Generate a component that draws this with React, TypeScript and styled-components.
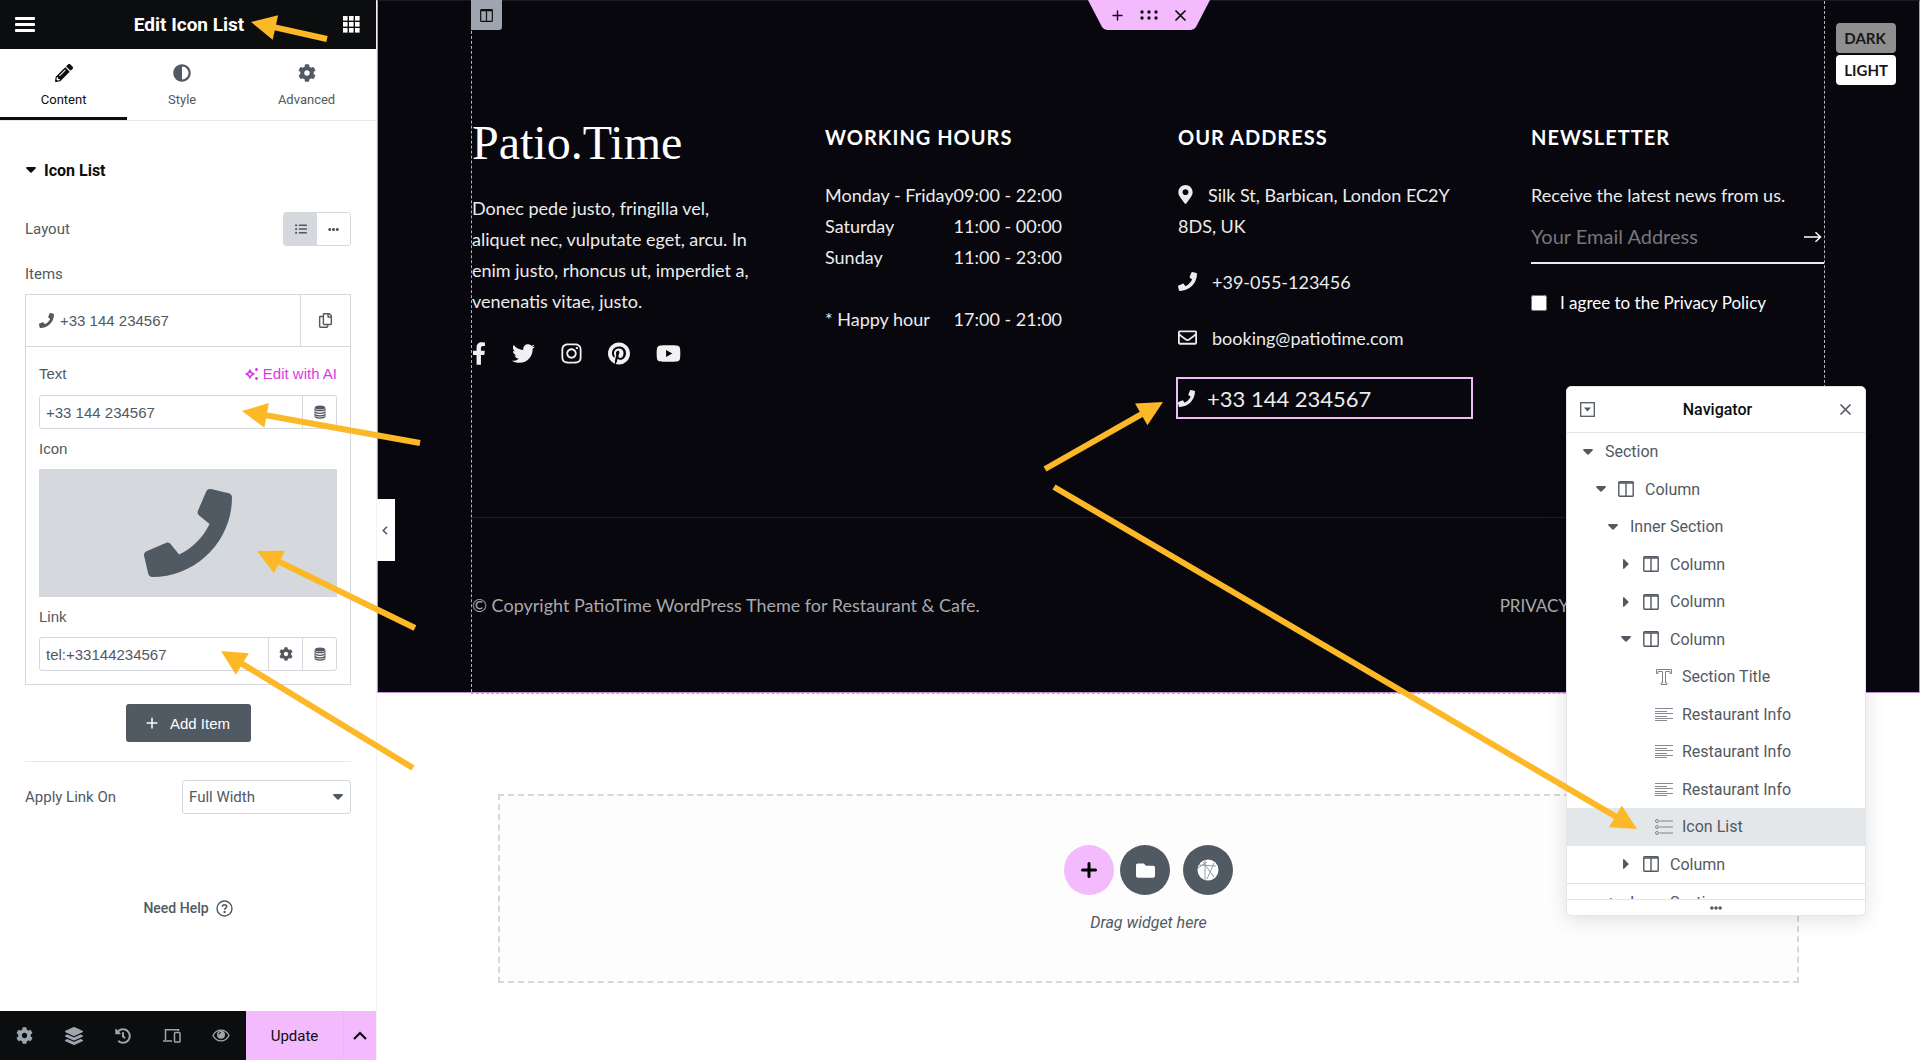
import React from "react";
import styled, { createGlobalStyle } from "styled-components";
import {
  FaAdjust,
  FaCog,
  FaEllipsisH,
  FaFacebookF,
  FaFolder,
  FaHistory,
  FaInstagram,
  FaLayerGroup,
  FaListUl,
  FaMapMarkerAlt,
  FaPencilAlt,
  FaPhone,
  FaPinterest,
  FaRegCopy,
  FaRegEnvelope,
  FaTwitter,
  FaYoutube,
} from "react-icons/fa";

const ui = 'Roboto, "Noto Sans", sans-serif';
const field = '"Liberation Sans", Arial, sans-serif';
const site = 'Lato, "Open Sans", sans-serif';
const slate = "#515962";
const line = "#d5d8dc";
const pink = "#f3bafd";
const ink = "#0c0d0e";
const night = "#07070d";

const GlobalStyle = createGlobalStyle`
  *, *::before, *::after { box-sizing: border-box; }
  body { margin: 0; background: #fff; font-family: ${ui}; color: ${slate}; }
  button, input, select { font: inherit; color: inherit; }
  h1, h2, p, ul { margin: 0; padding: 0; }
  ul { list-style: none; }
  svg { display: block; }
`;

const Page = styled.div`
  position: relative;
  display: flex;
  min-height: 100vh;
  overflow: hidden;
`;

/* ---------- editor panel ---------- */

const Panel = styled.aside`
  display: flex;
  flex-direction: column;
  flex: none;
  width: 377px;
  border-right: 1px solid #f1f2f3;
  background: #fff;
`;

const PanelHeader = styled.header`
  display: flex;
  align-items: center;
  justify-content: space-between;
  height: 49px;
  padding: 0 16px 0 15px;
  background: ${ink};
  color: #fff;
`;

const PanelTitle = styled.h1`
  font-size: 19px;
  font-weight: 700;
  line-height: 24px;
`;

const PlainButton = styled.button`
  display: flex;
  align-items: center;
  justify-content: center;
  padding: 0;
  border: 0;
  background: none;
  cursor: pointer;
`;

const Tabs = styled.nav`
  display: flex;
  height: 72px;
  border-bottom: 1px solid #e6e8ea;
`;

const Tab = styled.button<{ $active?: boolean }>`
  display: flex;
  flex: 1 1 auto;
  flex-direction: column;
  align-items: center;
  gap: 9px;
  padding: 15px 0 0;
  border: 0;
  border-bottom: 3px solid ${(p) => (p.$active ? ink : "transparent")};
  background: none;
  color: ${(p) => (p.$active ? ink : slate)};
  font-size: 13px;
  line-height: 18px;
  cursor: pointer;
`;

const Controls = styled.div`
  display: flex;
  flex: 1;
  flex-direction: column;
  padding: 37px 25px 0;
`;

const SectionToggle = styled.button`
  display: flex;
  align-items: center;
  gap: 8px;
  height: 24px;
  padding: 0 1px;
  border: 0;
  background: none;
  color: ${ink};
  font-size: 16px;
  font-weight: 700;
  cursor: pointer;
`;

const ControlRow = styled.div<{ $top: number }>`
  display: flex;
  align-items: center;
  justify-content: space-between;
  margin-top: ${(p) => p.$top}px;
`;

const Label = styled.label`
  font-size: 15px;
  line-height: 20px;
`;

const Choice = styled.div`
  display: flex;
  height: 34px;
  border: 1px solid ${line};
  border-radius: 3px;
  overflow: hidden;
`;

const ChoiceButton = styled(PlainButton)<{ $active?: boolean }>`
  width: 33px;
  background: ${(p) => (p.$active ? line : "#fff")};
`;

const ItemsLabel = styled.div`
  margin-top: 18px;
  font-size: 15px;
  line-height: 20px;
`;

const Repeater = styled.div`
  margin-top: 10px;
  border: 1px solid ${line};
  font-family: ${field};
  font-size: 15px;
`;

const RepeaterHead = styled.div`
  display: flex;
  height: 52px;
  border-bottom: 1px solid ${line};
`;

const RepeaterTitle = styled.button`
  display: flex;
  flex: 1;
  align-items: center;
  gap: 6px;
  padding: 0 13px;
  border: 0;
  background: none;
  cursor: pointer;
`;

const CopyButton = styled(PlainButton)`
  width: 50px;
  border-left: 1px solid ${line};
`;

const RepeaterBody = styled.div`
  display: flex;
  flex-direction: column;
  padding: 17px 13px 13px;
`;

const FieldHead = styled.div`
  display: flex;
  align-items: center;
  justify-content: space-between;
  line-height: 20px;
`;

const AiButton = styled(PlainButton)`
  gap: 4px;
  color: #d93bdf;
`;

const FieldBox = styled.div`
  display: flex;
  height: 34px;
  margin: 11px 0 10px;
  border: 1px solid ${line};
  border-radius: 3px;
`;

const LastFieldBox = styled(FieldBox)`
  margin: 10px 0 0;
`;

const FieldInput = styled.input`
  flex: 1;
  min-width: 0;
  padding: 0 6px;
  border: 0;
  outline: 0;
  background: none;
`;

const FieldButton = styled(PlainButton)`
  width: 34px;
  border-left: 1px solid ${line};
`;

const IconPreview = styled.button`
  display: flex;
  align-items: center;
  justify-content: center;
  height: 128px;
  margin: 10px 0;
  padding: 0;
  border: 0;
  background: ${line};
  cursor: pointer;
`;

const AddItem = styled.button`
  display: flex;
  align-items: center;
  align-self: center;
  justify-content: center;
  gap: 12px;
  width: 125px;
  height: 38px;
  margin-top: 19px;
  border: 0;
  border-radius: 3px;
  background: ${slate};
  color: #fff;
  font-family: ${field};
  font-size: 15px;
  cursor: pointer;
`;

const Rule = styled.hr`
  width: 100%;
  margin: 19px 0 0;
  border: 0;
  border-top: 1px solid #e6e8ea;
`;

const SelectWrap = styled.div`
  position: relative;
  width: 169px;

  svg {
    position: absolute;
    top: 14px;
    right: 8px;
    pointer-events: none;
  }
`;

const Select = styled.select`
  width: 100%;
  height: 34px;
  padding: 0 6px;
  border: 1px solid ${line};
  border-radius: 3px;
  appearance: none;
  background: #fff;
  font-size: 15px;
`;

const HelpLink = styled.a`
  display: flex;
  align-items: center;
  align-self: center;
  gap: 7px;
  margin-top: 84px;
  color: ${slate};
  font-size: 14px;
  font-weight: 500;
  line-height: 20px;
  text-decoration: none;
`;

const PanelFooter = styled.footer`
  display: flex;
  height: 49px;
  background: ${ink};
  color: #9da5ae;
`;

const Tools = styled.div`
  display: flex;
  flex: 1;
`;

const Tool = styled(PlainButton)`
  flex: 1;
`;

const Update = styled(PlainButton)`
  width: 97px;
  background: ${pink};
  color: ${ink};
  font-size: 15px;
`;

const UpdateMore = styled(PlainButton)`
  width: 33px;
  border-left: 1px solid #efb3f9;
  background: ${pink};
  color: ${ink};
`;

/* ---------- page preview ---------- */

const Preview = styled.main`
  position: relative;
  flex: 1;
  min-width: 0;
  font-family: ${site};
`;

const FooterSection = styled.section`
  position: relative;
  padding: 0 94px 0 93px;
  border: 1px solid #c58bd0;
  border-top-color: #1a1a20;
  background: ${night};
  color: #ececec;
  font-size: 18px;
  line-height: 31px;
`;

const FooterInner = styled.div`
  border: 1px dashed #b4b4b8;
  border-width: 0 1px;
`;

const Columns = styled.div`
  display: grid;
  grid-template-columns: repeat(4, minmax(0, 1fr));
  gap: 60px;
  padding: 118px 0 98px;
  border-bottom: 1px solid #1c1c22;
`;

const Column = styled.div`
  padding-top: 6px;
`;

const Logo = styled.h2`
  margin-bottom: 26px;
  color: #fff;
  font-family: "Liberation Serif", "Times New Roman", serif;
  font-size: 48px;
  font-weight: 400;
  line-height: 48px;
`;

const Social = styled.div`
  display: flex;
  align-items: center;
  gap: 26px;
  height: 24px;
  margin-top: 24px;
`;

const SocialLink = styled.a<{ $width: number }>`
  color: #f1f1f1;

  svg {
    width: ${(p) => p.$width}px;
    height: 23px;
  }
`;

const ColumnTitle = styled.h2`
  margin-bottom: 31px;
  color: #fff;
  font-size: 20px;
  font-weight: 700;
  letter-spacing: 1px;
  line-height: 24px;
`;

const Hours = styled.table`
  border-collapse: collapse;

  th {
    width: 128px;
    padding: 0;
    font-weight: 400;
    text-align: left;
    white-space: nowrap;
  }

  td {
    height: 31px;
    padding: 0;
    white-space: nowrap;
  }
`;

const Contact = styled.p<{ $icon: number }>`
  margin-bottom: 25px;

  svg {
    display: inline-block;
    width: ${(p) => p.$icon}px;
    height: 19px;
    margin-right: 15px;
    vertical-align: -2px;
  }
`;

const Selected = styled.a`
  display: flex;
  align-items: center;
  gap: 12px;
  height: 42px;
  margin: -2px -2px 0;
  border: 2px solid #eebcf6;
  color: #ececec;
  font-size: 22px;
  text-decoration: none;
`;

const Subscribe = styled.form`
  display: flex;
  align-items: center;
  height: 53px;
  border-bottom: 2px solid #ececec;

  input {
    flex: 1;
    min-width: 0;
    padding: 0;
    border: 0;
    outline: 0;
    background: none;
    font-size: 20px;
  }

  input::placeholder {
    color: #77777b;
    opacity: 1;
  }
`;

const Agree = styled.label`
  display: flex;
  align-items: center;
  gap: 13px;
  margin-top: 23px;
  color: #fff;
  font-size: 17px;

  input {
    width: 16px;
    height: 16px;
    margin: 0;
  }
`;

const Legal = styled.div`
  display: flex;
  justify-content: space-between;
  padding: 72px 255px 71px 0;
  color: #a9a9ab;

  a {
    color: inherit;
    font-size: 17px;
    text-decoration: none;
  }
`;

const ColumnHandle = styled.button`
  position: absolute;
  top: -1px;
  left: 93px;
  display: flex;
  align-items: center;
  justify-content: center;
  width: 31px;
  height: 30px;
  padding: 0;
  border: 0;
  border-radius: 0 0 3px 0;
  background: #9da5ae;
  color: ${ink};
`;

const SectionHandle = styled.div`
  position: absolute;
  top: -1px;
  left: 50%;
  display: flex;
  align-items: center;
  justify-content: center;
  gap: 17px;
  width: 122px;
  height: 30px;
  margin-left: -61px;
  color: ${ink};

  > svg {
    position: absolute;
    inset: 0;
  }

  button {
    position: relative;
  }
`;

const Modes = styled.div`
  position: absolute;
  top: 22px;
  right: 23px;
  display: flex;
  flex-direction: column;
  gap: 2px;
`;

const Mode = styled.button<{ $dim?: boolean }>`
  height: 30px;
  padding: 0 8px;
  border: 0;
  border-radius: 4px;
  background: ${(p) => (p.$dim ? "#8f8f8f" : "#fff")};
  color: #17171b;
  font-size: 15px;
  font-weight: 700;
  text-align: left;
`;

const BottomGuide = styled.div`
  margin: 0 94px;
  border-top: 1px dashed #c9a5d4;
`;

const DropZone = styled.section`
  display: flex;
  flex-direction: column;
  align-items: center;
  margin: 100px 121px 77px;
  padding: 49px 0 48px;
  border: 2px dashed ${line};
  background: #fdfdfd;
  color: ${slate};
  font-family: ${ui};
  font-size: 16px;
  font-style: italic;
  line-height: 20px;
`;

const Circles = styled.div`
  display: flex;
  gap: 6px;
  margin-bottom: 18px;
`;

const Circle = styled(PlainButton)<{ $primary?: boolean; $apart?: boolean }>`
  width: 50px;
  height: 50px;
  margin-left: ${(p) => (p.$apart ? 7 : 0)}px;
  border-radius: 50%;
  background: ${(p) => (p.$primary ? pink : slate)};
  color: ${(p) => (p.$primary ? "#000" : "#fff")};
`;

const Collapse = styled.button`
  position: absolute;
  top: 499px;
  left: 0;
  display: flex;
  align-items: center;
  width: 18px;
  height: 62px;
  padding: 0 0 0 4px;
  border: 0;
  background: #fff;
  color: ${slate};
`;

/* ---------- navigator ---------- */

const Navigator = styled.aside`
  position: absolute;
  top: 386px;
  right: 54px;
  width: 300px;
  border: 1px solid #e3e5e8;
  border-radius: 5px;
  background: #fff;
  box-shadow: 0 4px 20px rgba(0, 0, 0, 0.12);
  font-size: 16px;
  overflow: hidden;
`;

const NavHeader = styled.header`
  display: flex;
  align-items: center;
  justify-content: space-between;
  height: 46px;
  padding: 0 14px 0 13px;
  border-bottom: 1px solid #e3e6e9;

  h2 {
    color: ${ink};
    font-size: 16px;
    font-weight: 500;
  }
`;

const NavScroll = styled.div`
  height: 467px;
  overflow: hidden;
  border-bottom: 1px solid #e3e6e9;
`;

const Tree = styled.ul`
  display: grid;
  grid-auto-rows: 1fr;
  height: 450px;
`;

const indents = [16, 29, 41, 54, 88];

const TreeRow = styled.li<{ $level: number; $active?: boolean }>`
  display: flex;
  align-items: center;
  padding-left: ${(p) => indents[p.$level]}px;
  background: ${(p) => (p.$active ? "#e4e7ea" : "transparent")};
`;

const NextRow = styled(TreeRow).attrs({ as: "div" })`
  height: 38px;
  border-top: 1px solid #dde1e4;
`;

const Twist = styled.span`
  flex: none;
  width: 22px;
`;

const NodeIcon = styled.span`
  flex: none;
  width: 27px;
`;

const NavFooter = styled.footer`
  display: flex;
  align-items: center;
  justify-content: center;
  height: 15px;
`;

const Annotations = styled.svg`
  position: absolute;
  top: 0;
  left: 0;
  pointer-events: none;
`;

/* ---------- icons ---------- */

const CaretDown = ({ size = 10 }: { size?: number }) => (
  <svg width={size} height={6} viewBox="0 0 10 6" fill="currentColor">
    <path d="M1 0h8c.8 0 1.200.8.6 1.400l-4 4a.9.9 0 0 1-1.200 0l-4-4C-.2.800.200 0 1 0z" />
  </svg>
);

const CaretRight = () => (
  <svg width="10" height="10" viewBox="0 0 10 10" fill="currentColor">
    <path d="M2 1c0-.8.800-1.200 1.400-.6l4 4a.9.9 0 0 1 0 1.200l-4 4C2.800 10.200 2 9.800 2 9z" />
  </svg>
);

const MenuIcon = () => (
  <svg width="20" height="16" viewBox="0 0 20 16" fill="currentColor">
    <rect width="20" height="3" rx="1" y="0" />
    <rect width="20" height="3" rx="1" y="6" />
    <rect width="20" height="3" rx="1" y="12" />
  </svg>
);

const AppsIcon = () => (
  <svg width="17" height="17" viewBox="0 0 17 17" fill="currentColor">
    {[0, 6, 12].map((y) => [0, 6, 12].map((x) => <rect key={`${x}-${y}`} x={x} y={y} width="4.600" height="4.600" />))}
  </svg>
);

const DatabaseIcon = () => (
  <svg width="12" height="14" viewBox="0 0 12 14">
    <ellipse cx="6" cy="2.400" rx="5" ry="2" fill="currentColor" />
    <g fill="none" stroke="currentColor" strokeWidth="1.300">
      <path d="M1 4.200c1 2 9 2 10 0M1 6.800c1 2 9 2 10 0M1 9.400c1 2 9 2 10 0M1 11.500c1 2 9 2 10 0" />
      <path d="M1 2.500v9.200M11 2.500v9.200" strokeWidth=".8" />
    </g>
  </svg>
);

const SparkleIcon = () => (
  <svg width="14" height="14" viewBox="0 0 14 14" fill="none" stroke="currentColor" strokeWidth="1.500" strokeLinejoin="round">
    <path d="M5 3c.6 2.500 1.500 3.400 4 4-2.500.6-3.400 1.500-4 4-.6-2.500-1.500-3.400-4-4 2.500-.6 3.400-1.500 4-4z" />
    <path d="M11.500 1v3M10 2.500h3M11.500 10v3M10 11.500h3" />
  </svg>
);

const PlusIcon = ({ size, weight = 2 }: { size: number; weight?: number }) => (
  <svg width={size} height={size} viewBox="0 0 16 16" fill="none" stroke="currentColor" strokeWidth={weight} strokeLinecap="round">
    <path d="M8 1.500v13M1.500 8h13" />
  </svg>
);

const CloseIcon = () => (
  <svg width="11" height="11" viewBox="0 0 11 11" fill="none" stroke="currentColor" strokeWidth="1.700" strokeLinecap="round">
    <path d="M1 1l9 9M10 1l-9 9" />
  </svg>
);

const DragDots = () => (
  <svg width="18" height="10" viewBox="0 0 18 10" fill="currentColor">
    {[2, 9, 16].map((x) => [2, 8].map((y) => <circle key={`${x}-${y}`} cx={x} cy={y} r="1.700" />))}
  </svg>
);

const HelpIcon = () => (
  <svg width="17" height="17" viewBox="0 0 17 17" fill="none" stroke="currentColor" strokeWidth="1.400">
    <circle cx="8.500" cy="8.500" r="7.500" />
    <path d="M6.400 6.800c0-2.700 4.300-2.600 4.300-.2 0 1.500-2.100 1.500-2.100 3.100" strokeWidth="1.600" />
    <circle cx="8.600" cy="12" r=".5" fill="currentColor" />
  </svg>
);

const DevicesIcon = () => (
  <svg width="18" height="16" viewBox="0 0 18 16" fill="none" stroke="currentColor" strokeWidth="1.500">
    <path d="M15.500 3V1.800H2.500V12M0 13h9" />
    <rect x="11.500" y="4.500" width="5.500" height="9.500" rx=".8" />
  </svg>
);

const EyeIcon = () => (
  <svg width="18" height="13" viewBox="0 0 18 13">
    <path d="M1 6.500C4.500-.7 13.500-.7 17 6.500c-3.500 7.200-12.500 7.200-16 0z" fill="none" stroke="currentColor" strokeWidth="1.400" />
    <circle cx="9" cy="5.800" r="4" fill="currentColor" />
    <path d="M6.800 5.500A2.200 2.200 0 0 1 9 3.400" fill="none" stroke={ink} strokeWidth="1" />
  </svg>
);

const ChevronUp = () => (
  <svg width="14" height="9" viewBox="0 0 14 9" fill="none" stroke="currentColor" strokeWidth="2.200">
    <path d="M1 8l6-6 6 6" />
  </svg>
);

const ChevronLeft = () => (
  <svg width="8" height="9" viewBox="0 0 8 9" fill="none" stroke="currentColor" strokeWidth="1.600">
    <path d="M6 .8L2.300 4.500 6 8.200" />
  </svg>
);

const ColumnsIcon = ({ size = 16 }: { size?: number }) => (
  <svg width={size} height={size} viewBox="0 0 16 16" fill="none" stroke="currentColor" strokeWidth="1.400">
    <rect x=".8" y=".8" width="14.400" height="14.400" rx=".8" />
    <path d="M.8 2h14.400M8 2v13" />
  </svg>
);

const HeadingIcon = () => (
  <svg width="18" height="18" viewBox="0 0 18 18" fill="none" stroke="#7d848c" strokeWidth="1">
    <path d="M1.500 1.500h15v4h-1.500v-2h-4.500v11.500h1.500v1.500h-6v-1.500h1.500V3.500H3v2H1.500z" />
  </svg>
);

const TextIcon = () => (
  <svg width="18" height="13" viewBox="0 0 18 13" stroke="#858c94" strokeWidth="1">
    <path d="M0 .5h18M0 3.500h12M0 5.500h18M0 8.500h12M0 10.500h18M0 12.500h12" />
  </svg>
);

const ListIcon = () => (
  <svg width="18" height="16" viewBox="0 0 18 16" fill="none" stroke="#7d848c" strokeWidth="1">
    {[2, 8, 14].map((y) => (
      <g key={y}>
        <circle cx="2" cy={y} r="1.500" />
        <path d={`M4.500 ${y}H18`} />
      </g>
    ))}
  </svg>
);

const DockIcon = () => (
  <svg width="15" height="15" viewBox="0 0 15 15">
    <rect x=".7" y=".7" width="13.600" height="13.600" fill="none" stroke="currentColor" strokeWidth="1.300" />
    <path d="M4 5.500h7L7.500 9.500z" fill="currentColor" />
  </svg>
);

const ArrowRight = () => (
  <svg width="20" height="12" viewBox="0 0 20 12" fill="none" stroke="#fff" strokeWidth="1.500">
    <path d="M0 6h16M11.500 1.200L16.500 6l-5 4.800" />
  </svg>
);

const GlobeIcon = () => (
  <svg width="22" height="22" viewBox="0 0 22 22">
    <circle cx="11" cy="11" r="10.500" fill="#fff" />
    <path d="M8 1v20M2 6l17 1M6 3l11 15M17 4L10 20M1 9l9-6" fill="none" stroke="#8d939a" strokeWidth=".9" />
  </svg>
);

const Arrow = ({ from, to }: { from: [number, number]; to: [number, number] }) => {
  const angle = (Math.atan2(to[1] - from[1], to[0] - from[0]) * 180) / Math.PI;
  const length = Math.hypot(to[0] - from[0], to[1] - from[1]);
  return (
    <g transform={`translate(${from[0]} ${from[1]}) rotate(${angle})`} fill="#fdb827">
      <rect y="-3" width={length - 20} height="6" />
      <path d={`M${length} 0l-25-12.500v25z`} />
    </g>
  );
};

/* ---------- data ---------- */

const hours: [string, string][] = [
  ["Monday - Friday", "09:00 - 22:00"],
  ["Saturday", "11:00 - 00:00"],
  ["Sunday", "11:00 - 23:00"],
  ["", ""],
  ["* Happy hour", "17:00 - 21:00"],
];

const socials = [
  { name: "Facebook", Icon: FaFacebookF, width: 14 },
  { name: "Twitter", Icon: FaTwitter, width: 23 },
  { name: "Instagram", Icon: FaInstagram, width: 21 },
  { name: "Pinterest", Icon: FaPinterest, width: 22 },
  { name: "YouTube", Icon: FaYoutube, width: 25 },
];

type Node = { level: number; name: string; open?: boolean; icon?: React.ReactNode; active?: boolean };

const nodes: Node[] = [
  { level: 0, name: "Section", open: true },
  { level: 1, name: "Column", open: true, icon: <ColumnsIcon /> },
  { level: 2, name: "Inner Section", open: true },
  { level: 3, name: "Column", open: false, icon: <ColumnsIcon /> },
  { level: 3, name: "Column", open: false, icon: <ColumnsIcon /> },
  { level: 3, name: "Column", open: true, icon: <ColumnsIcon /> },
  { level: 4, name: "Section Title", icon: <HeadingIcon /> },
  { level: 4, name: "Restaurant Info", icon: <TextIcon /> },
  { level: 4, name: "Restaurant Info", icon: <TextIcon /> },
  { level: 4, name: "Restaurant Info", icon: <TextIcon /> },
  { level: 4, name: "Icon List", icon: <ListIcon />, active: true },
  { level: 3, name: "Column", open: false, icon: <ColumnsIcon /> },
];

const arrows: { from: [number, number]; to: [number, number] }[] = [
  { from: [327, 39], to: [251, 22] },
  { from: [420, 443], to: [242, 411] },
  { from: [415, 628], to: [257, 551] },
  { from: [413, 768], to: [221, 651] },
  { from: [1045, 469], to: [1163, 402] },
  { from: [1054, 487], to: [1637, 829] },
];

export default function App() {
  return (
    <>
      <GlobalStyle />
      <Page>
        <Panel>
          <PanelHeader>
            <PlainButton aria-label="Menu"><MenuIcon /></PlainButton>
            <PanelTitle>Edit Icon List</PanelTitle>
            <PlainButton aria-label="Widgets"><AppsIcon /></PlainButton>
          </PanelHeader>
          <Tabs>
            <Tab $active><FaPencilAlt size={18} />Content</Tab>
            <Tab><FaAdjust size={18} />Style</Tab>
            <Tab><FaCog size={18} />Advanced</Tab>
          </Tabs>
          <Controls>
            <SectionToggle><CaretDown />Icon List</SectionToggle>
            <ControlRow $top={30}>
              <Label as="span">Layout</Label>
              <Choice>
                <ChoiceButton $active aria-label="Default"><FaListUl size={12} /></ChoiceButton>
                <ChoiceButton aria-label="Inline"><FaEllipsisH size={11} /></ChoiceButton>
              </Choice>
            </ControlRow>
            <ItemsLabel>Items</ItemsLabel>
            <Repeater>
              <RepeaterHead>
                <RepeaterTitle><FaPhone size={15} />+33 144 234567</RepeaterTitle>
                <CopyButton aria-label="Duplicate"><FaRegCopy size={15} /></CopyButton>
              </RepeaterHead>
              <RepeaterBody>
                <FieldHead>
                  <label htmlFor="item-text">Text</label>
                  <AiButton><SparkleIcon />Edit with AI</AiButton>
                </FieldHead>
                <FieldBox>
                  <FieldInput id="item-text" defaultValue="+33 144 234567" />
                  <FieldButton aria-label="Dynamic text"><DatabaseIcon /></FieldButton>
                </FieldBox>
                <FieldHead>Icon</FieldHead>
                <IconPreview aria-label="Choose icon"><FaPhone size={88} /></IconPreview>
                <FieldHead><label htmlFor="item-link">Link</label></FieldHead>
                <LastFieldBox>
                  <FieldInput id="item-link" defaultValue="tel:+33144234567" />
                  <FieldButton aria-label="Link options"><FaCog size={14} /></FieldButton>
                  <FieldButton aria-label="Dynamic link"><DatabaseIcon /></FieldButton>
                </LastFieldBox>
              </RepeaterBody>
            </Repeater>
            <AddItem><PlusIcon size={12} />Add Item</AddItem>
            <Rule />
            <ControlRow $top={18}>
              <Label htmlFor="apply-link">Apply Link On</Label>
              <SelectWrap>
                <Select id="apply-link"><option>Full Width</option></Select>
                <CaretDown />
              </SelectWrap>
            </ControlRow>
            <HelpLink href="#help">Need Help<HelpIcon /></HelpLink>
          </Controls>
          <PanelFooter>
            <Tools>
              <Tool aria-label="Settings"><FaCog size={17} /></Tool>
              <Tool aria-label="Navigator"><FaLayerGroup size={18} /></Tool>
              <Tool aria-label="History"><FaHistory size={16} /></Tool>
              <Tool aria-label="Responsive mode"><DevicesIcon /></Tool>
              <Tool aria-label="Preview changes"><EyeIcon /></Tool>
            </Tools>
            <Update>Update</Update>
            <UpdateMore aria-label="Save options"><ChevronUp /></UpdateMore>
          </PanelFooter>
        </Panel>

        <Preview>
          <FooterSection>
            <FooterInner>
              <Columns>
                <div>
                  <Logo>Patio.Time</Logo>
                  <p>Donec pede justo, fringilla vel, aliquet nec, vulputate eget, arcu. In enim justo, rhoncus ut, imperdiet a, venenatis vitae, justo.</p>
                  <Social>
                    {socials.map(({ name, Icon, width }) => (
                      <SocialLink key={name} href={`#${name.toLowerCase()}`} aria-label={name} $width={width}>
                        <Icon />
                      </SocialLink>
                    ))}
                  </Social>
                </div>
                <Column>
                  <ColumnTitle>WORKING HOURS</ColumnTitle>
                  <Hours>
                    <tbody>
                      {hours.map(([day, time]) => (
                        <tr key={day}><th scope="row">{day}</th><td>{time}</td></tr>
                      ))}
                    </tbody>
                  </Hours>
                </Column>
                <Column>
                  <ColumnTitle>OUR ADDRESS</ColumnTitle>
                  <Contact $icon={15}><FaMapMarkerAlt />Silk St, Barbican, London EC2Y 8DS, UK</Contact>
                  <Contact $icon={19}><FaPhone />+39-055-123456</Contact>
                  <Contact $icon={19}><FaRegEnvelope />booking@patiotime.com</Contact>
                  <Selected href="tel:+33144234567"><FaPhone size={17} />+33 144 234567</Selected>
                </Column>
                <Column>
                  <ColumnTitle>NEWSLETTER</ColumnTitle>
                  <p>Receive the latest news from us.</p>
                  <Subscribe>
                    <input type="email" aria-label="Your Email Address" placeholder="Your Email Address" />
                    <PlainButton type="button" aria-label="Subscribe"><ArrowRight /></PlainButton>
                  </Subscribe>
                  <Agree><input type="checkbox" />I agree to the Privacy Policy</Agree>
                </Column>
              </Columns>
              <Legal>
                <p>© Copyright PatioTime WordPress Theme for Restaurant &amp; Cafe.</p>
                <a href="#privacy">PRIVACY</a>
              </Legal>
            </FooterInner>
            <ColumnHandle aria-label="Edit column"><ColumnsIcon size={13} /></ColumnHandle>
            <SectionHandle>
              <svg width="122" height="30" viewBox="0 0 122 30" fill={pink}>
                <path d="M0 0h122l-14 27q-2 3-5 3H19q-3 0-5-3z" />
              </svg>
              <PlainButton aria-label="Add section"><PlusIcon size={11} /></PlainButton>
              <PlainButton aria-label="Edit section"><DragDots /></PlainButton>
              <PlainButton aria-label="Delete section"><CloseIcon /></PlainButton>
            </SectionHandle>
            <Modes>
              <Mode $dim>DARK</Mode>
              <Mode>LIGHT</Mode>
            </Modes>
          </FooterSection>
          <BottomGuide />
          <DropZone>
            <Circles>
              <Circle $primary aria-label="Add new section"><PlusIcon size={16} weight={3} /></Circle>
              <Circle aria-label="Add template"><FaFolder size={19} /></Circle>
              <Circle $apart aria-label="Theme library"><GlobeIcon /></Circle>
            </Circles>
            <p>Drag widget here</p>
          </DropZone>
          <Collapse aria-label="Hide panel"><ChevronLeft /></Collapse>
        </Preview>

        <Navigator>
          <NavHeader>
            <PlainButton aria-label="Dock"><DockIcon /></PlainButton>
            <h2>Navigator</h2>
            <PlainButton aria-label="Close"><CloseIcon /></PlainButton>
          </NavHeader>
          <NavScroll>
            <Tree>
              {nodes.map((node, i) => (
                <TreeRow key={i} $level={node.level} $active={node.active}>
                  {node.open !== undefined && <Twist>{node.open ? <CaretDown /> : <CaretRight />}</Twist>}
                  {node.icon && <NodeIcon>{node.icon}</NodeIcon>}
                  {node.name}
                </TreeRow>
              ))}
            </Tree>
            <NextRow $level={2}><Twist><CaretRight /></Twist>Inner Section</NextRow>
          </NavScroll>
          <NavFooter><FaEllipsisH size={12} /></NavFooter>
        </Navigator>

        <Annotations width="1660" height="850" viewBox="0 0 1660 850" aria-hidden="true">
          {arrows.map((a, i) => <Arrow key={i} from={a.from} to={a.to} />)}
        </Annotations>
      </Page>
    </>
  );
}
